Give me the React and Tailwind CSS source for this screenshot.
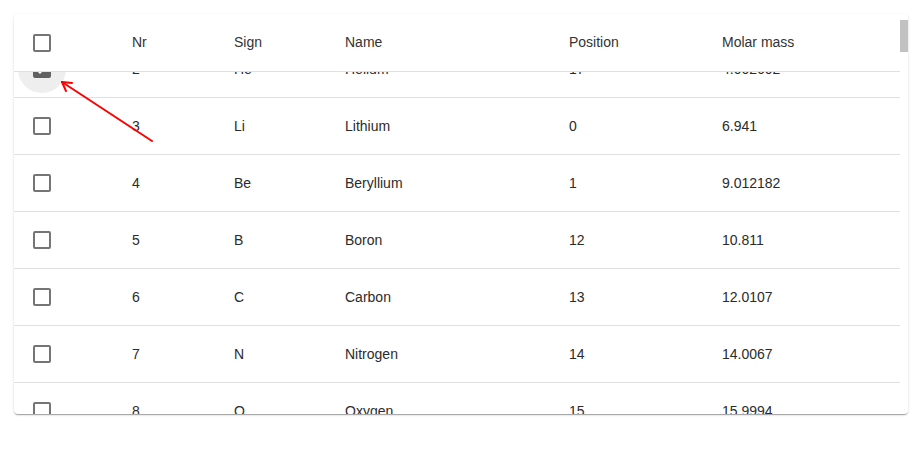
import React, { useLayoutEffect, useRef } from "react";

const rows = [
  { nr: 1, sign: "H", name: "Hydrogen", pos: 1, mass: "1.00794" },
  { nr: 2, sign: "He", name: "Helium", pos: 17, mass: "4.002602" },
  { nr: 3, sign: "Li", name: "Lithium", pos: 0, mass: "6.941" },
  { nr: 4, sign: "Be", name: "Beryllium", pos: 1, mass: "9.012182" },
  { nr: 5, sign: "B", name: "Boron", pos: 12, mass: "10.811" },
  { nr: 6, sign: "C", name: "Carbon", pos: 13, mass: "12.0107" },
  { nr: 7, sign: "N", name: "Nitrogen", pos: 14, mass: "14.0067" },
  { nr: 8, sign: "O", name: "Oxygen", pos: 15, mass: "15.9994" },
  { nr: 9, sign: "F", name: "Fluorine", pos: 16, mass: "18.9984032" },
];

function Checkbox({ checked }) {
  if (checked) {
    return (
      <span className="relative flex h-[18px] w-[18px] items-center justify-center rounded-[2px] bg-[#616161]">
        <svg viewBox="0 0 24 24" className="h-[16px] w-[16px]" fill="none" stroke="#fff" strokeWidth="3">
          <path d="M4 12.5l5 5L20 6.5" />
        </svg>
      </span>
    );
  }
  return <span className="relative block h-[18px] w-[18px] rounded-[2px] border-2 border-[#757575]" />;
}

function Row({ d, checked, ripple }) {
  return (
    <div className="flex h-[57px] items-center border-b border-[#e0e0e0] text-[14px] text-[#2b2b2b]">
      <div className="relative flex h-full w-[118px] items-center pl-[19px]">
        {ripple && (
          <span className="absolute left-[4px] top-1/2 h-12 w-12 -translate-y-1/2 rounded-full bg-[#eeeeee]" />
        )}
        <Checkbox checked={checked} />
      </div>
      <div className="w-[102px]">{d.nr}</div>
      <div className="w-[111px]">{d.sign}</div>
      <div className="w-[224px]">{d.name}</div>
      <div className="w-[153px]">{d.pos}</div>
      <div className="flex-1">{d.mass}</div>
    </div>
  );
}

export default function App() {
  const ref = useRef(null);
  useLayoutEffect(() => {
    if (ref.current) ref.current.scrollTop = 88;
  }, []);
  return (
    <div className="relative h-[449px] w-[918px] overflow-hidden bg-white pl-[14px] pt-[14px] font-['Liberation_Sans',Arial,sans-serif]">
      <div className="relative h-[400px] w-[894px] overflow-hidden rounded-[4px] bg-white shadow-[0_2px_1px_-1px_rgba(0,0,0,0.2),0_1px_1px_0_rgba(0,0,0,0.14),0_1px_3px_0_rgba(0,0,0,0.12)]">
        <div ref={ref} className="h-full w-[894px] overflow-y-auto [scrollbar-width:none]">
          <div className="w-[886px]">
            <div className="sticky top-0 z-10 flex h-[58px] items-center border-b border-[#e0e0e0] bg-white text-[14px] text-[#333333]">
              <div className="flex w-[118px] items-center pl-[19px]">
                <Checkbox />
              </div>
              <div className="w-[102px]">Nr</div>
              <div className="w-[111px]">Sign</div>
              <div className="w-[224px]">Name</div>
              <div className="w-[153px]">Position</div>
              <div className="flex-1">Molar mass</div>
            </div>
            {rows.map((d) => (
              <Row key={d.nr} d={d} checked={d.nr === 2} ripple={d.nr === 2} />
            ))}
          </div>
        </div>
        <div className="absolute right-0 top-[6px] z-20 h-[32px] w-[8px] bg-[#c1c1c1]" />
      </div>
      <svg className="pointer-events-none absolute left-0 top-0 z-30" width="918" height="449">
        <g stroke="#ff0000" strokeWidth="2" strokeLinecap="round" fill="none">
          <line x1="152" y1="141" x2="62" y2="82" />
          <line x1="62" y1="82" x2="72" y2="83" />
          <line x1="62" y1="82" x2="66" y2="91" />
        </g>
      </svg>
    </div>
  );
}
